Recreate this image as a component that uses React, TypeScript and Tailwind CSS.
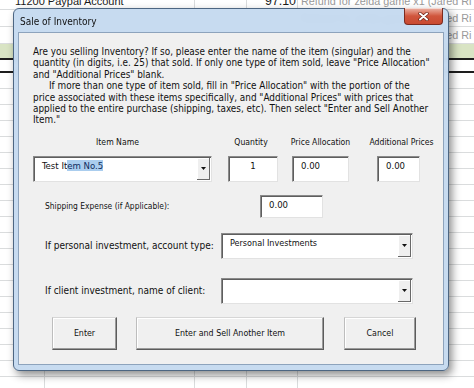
import React from "react";

const ui = { fontFamily: '"DejaVu Sans Condensed", "DejaVu Sans", Tahoma, sans-serif', fontStretch: "condensed" } as const;
const cellFont = { fontFamily: '"Liberation Sans", Arial, sans-serif' } as const;

function SheetRow({
  h,
  a = "",
  qty = "",
  note = "",
  className = "",
  lines = true,
}: {
  h: number;
  a?: string;
  qty?: string;
  note?: string;
  className?: string;
  lines?: boolean;
}) {
  return (
    <div className={`flex shrink-0 text-[12.4px] leading-none ${className}`} style={{ height: h }}>
      <div className={`flex w-[45px] shrink-0 items-center ${lines ? "border-r border-[#dadcdd]" : ""}`}>
        <span className="whitespace-nowrap pl-[15px] text-[11px] text-[#1b1b1b]">{a}</span>
      </div>
      <div className="w-[150px] shrink-0 border-r border-[#dadcdd]" />
      <div className="w-[52px] shrink-0 border-r border-[#dadcdd]" />
      <div className="flex w-[51px] shrink-0 items-center justify-end border-r border-[#dadcdd] pr-[1px] text-[#1b1b1b]">
        {qty}
      </div>
      <div className="flex flex-1 items-center overflow-hidden whitespace-nowrap pl-[3px] text-[10.8px] text-[#9a9a9a]">
        {note}
      </div>
    </div>
  );
}

function Sheet() {
  const rest = Array.from({ length: 20 });
  const note = "Refund for zelda game x1 (Jared Ri";
  return (
    <div className="absolute inset-0 flex flex-col" style={cellFont}>
      <div className="-mt-[6px]" />
      <SheetRow h={16} a="11200 Paypal Account" qty="97.10" note={note} className="border-b border-[#dadcdd]" lines={false} />
      <SheetRow h={17} note={note} className="border-b border-[#dadcdd]" lines={false} />
      <SheetRow h={17} note={note} className="border-b border-[#dadcdd]" />
      <div className="h-[14px] shrink-0 bg-[#d9e4c4]" />
      <SheetRow h={15} className="border-y-2 border-[#1e1e1e]" />
      {rest.map((_, i) => (
        <SheetRow key={i} h={16} className="border-b border-[#dadcdd]" />
      ))}
    </div>
  );
}

function DropArrow() {
  return (
    <div className="flex h-full w-[13px] shrink-0 items-center justify-center border-r border-b border-r-[#696969] border-b-[#696969] bg-[#efefef] shadow-[inset_1px_1px_0_#ffffff]">
      <svg width="5" height="3" viewBox="0 0 5 3">
        <path d="M0 0h5L2.5 3z" fill="#111" />
      </svg>
    </div>
  );
}

const sunken =
  "border-t border-l border-t-[#8a8a8a] border-l-[#8a8a8a] border-r border-b border-r-[#e2e2e2] border-b-[#e2e2e2] shadow-[inset_1px_1px_0_#5e5e5e] bg-white";

function Combo({ w, h, children }: { w: number; h: number; children?: React.ReactNode }) {
  return (
    <div className={`flex shrink-0 ${sunken}`} style={{ width: w, height: h }}>
      <div className="flex-1 whitespace-nowrap pl-[8px] pt-[3px] text-[9px] leading-[12px] text-[#111]">{children}</div>
      <div className="flex h-full items-stretch py-[1px] pr-[1px]">
        <DropArrow />
      </div>
    </div>
  );
}

function Field({ w, h, value, center = false }: { w: number; h: number; value: string; center?: boolean }) {
  return (
    <div
      className={`shrink-0 pt-[3px] text-[9.5px] leading-[12px] text-[#111] ${sunken} ${center ? "text-center" : "pl-[8px]"}`}
      style={{ width: w, height: h }}
    >
      {value}
    </div>
  );
}

function Btn({ w, children }: { w: number; children: React.ReactNode }) {
  return (
    <button
      type="button"
      className="flex h-[33px] shrink-0 items-center justify-center border border-t-[#d6d6d6] border-l-[#bdbdbd] border-r-[#5c5c5c] border-b-[#5c5c5c] bg-[#f0f0f0] text-[8.8px] text-[#111] shadow-[inset_-1px_-1px_0_#9b9b9b,inset_1px_1px_0_#ffffff]"
      style={{ width: w }}
    >
      {children}
    </button>
  );
}

function Dialog() {
  return (
    <div className="absolute left-[13px] top-[8px] flex h-[363px] w-[436px] flex-col rounded-[6px] border border-[#4d6682] bg-[#c4d9ef]/95 px-[4px] pb-[5px] shadow-[3px_4px_8px_rgba(0,0,0,0.45)] backdrop-blur-[3px]">
      <div className="relative flex h-[23px] shrink-0 items-center pl-[2px] pt-[1px] text-[10px] text-[#111]" style={ui}>
        Sale of Inventory
        <div className="absolute right-[1px] top-[-1px] flex h-[17px] w-[39px] items-center justify-center rounded-b-[4px] border border-t-0 border-[#7c2b1f] bg-gradient-to-b from-[#eab3a6] via-[#d0553c] to-[#c94a30] shadow-[inset_0_1px_0_rgba(255,255,255,0.5)]">
          <svg width="11" height="9" viewBox="0 0 11 9">
            <path d="M2 1.5l7 6M9 1.5l-7 6" stroke="#6b2114" strokeWidth="3.4" strokeLinecap="round" />
            <path d="M2 1.5l7 6M9 1.5l-7 6" stroke="#ffffff" strokeWidth="2" strokeLinecap="round" />
          </svg>
        </div>
      </div>

      <div className="flex flex-1 flex-col border border-[#8da3bc] bg-[#f0f0f0] text-[#111]" style={ui}>
        <p className="pl-[14px] pt-[13px] text-[9.9px] leading-[11.4px] whitespace-nowrap">
          Are you selling Inventory? If so, please enter the name of the item (singular) and the
          <br />
          quantity (in digits, i.e. 25) that sold. If only one type of item sold, leave "Price Allocation"
          <br />
          and "Additional Prices" blank.
          <br />
          <span className="pl-[16px]">If more than one type of item sold, fill in "Price Allocation" with the portion of the</span>
          <br />
          price associated with these items specifically, and "Additional Prices" with prices that
          <br />
          applied to the entire purchase (shipping, taxes, etc). Then select "Enter and Sell Another
          <br />
          Item."
        </p>

        <div className="mt-[10px] flex pl-[14px] text-[8.6px]">
          <div className="flex w-[179px] shrink-0 flex-col items-center">
            <span className="h-[12px] whitespace-nowrap pr-[10px] leading-[12px]">Item Name</span>
            <div className="mt-[8px] flex h-[26px] w-[179px] shrink-0">
              <div className={`flex h-full w-full ${sunken}`}>
                <div className="flex-1 whitespace-nowrap pl-[8px] pt-[3px] text-[9.5px] leading-[12px]">
                  Test It<span className="bg-[#aacdee] text-[#0e2d60]">em No.5</span>
                </div>
                <div className="flex h-full py-[1px] pr-[1px]">
                  <DropArrow />
                </div>
              </div>
            </div>
          </div>
          <div className="ml-[16px] flex w-[50px] shrink-0 flex-col items-center">
            <span className="h-[12px] whitespace-nowrap pr-[4px] leading-[12px]">Quantity</span>
            <div className="mt-[8px]">
              <Field w={50} h={26} value="1" center />
            </div>
          </div>
          <div className="ml-[14px] flex w-[57px] shrink-0 flex-col items-center">
            <span className="h-[12px] whitespace-nowrap leading-[12px]">Price Allocation</span>
            <div className="mt-[8px]">
              <Field w={57} h={26} value="0.00" />
            </div>
          </div>
          <div className="ml-[28px] flex w-[43px] shrink-0 flex-col items-center">
            <span className="h-[12px] whitespace-nowrap pl-[6px] leading-[12px]">Additional Prices</span>
            <div className="mt-[8px]">
              <Field w={43} h={26} value="0.00" />
            </div>
          </div>
        </div>

        <div className="mt-[13px] flex h-[23px] items-center pl-[26px]">
          <span className="w-[215px] shrink-0 whitespace-nowrap text-[8.4px]">Shipping Expense (if Applicable):</span>
          <Field w={63} h={23} value="0.00" />
        </div>

        <div className="mt-[15px] flex h-[26px] items-center pl-[26px]">
          <span className="w-[176px] shrink-0 whitespace-nowrap text-[10px]">If personal investment, account type:</span>
          <Combo w={192} h={26}>
            Personal Investments
          </Combo>
        </div>

        <div className="mt-[19px] flex h-[26px] items-center pl-[26px]">
          <span className="w-[176px] shrink-0 whitespace-nowrap text-[10px]">If client investment, name of client:</span>
          <Combo w={192} h={26} />
        </div>

        <div className="mt-[13px] flex pl-[33px]">
          <Btn w={65}>Enter</Btn>
          <div className="ml-[19px]">
            <Btn w={188}>Enter and Sell Another Item</Btn>
          </div>
          <div className="ml-[20px]">
            <Btn w={72}>Cancel</Btn>
          </div>
        </div>
      </div>
    </div>
  );
}

export default function App() {
  return (
    <div className="relative h-[388px] w-[474px] overflow-hidden bg-white">
      <Sheet />
      <Dialog />
    </div>
  );
}
